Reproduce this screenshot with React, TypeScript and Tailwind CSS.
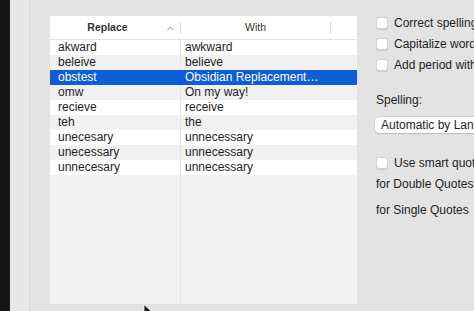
const rows = [
  ["akward", "awkward"],
  ["beleive", "believe"],
  ["obstest", "Obsidian Replacement…"],
  ["omw", "On my way!"],
  ["recieve", "receive"],
  ["teh", "the"],
  ["unecesary", "unnecessary"],
  ["unecessary", "unnecessary"],
  ["unnecesary", "unnecessary"],
];

const SELECTED = 2;

function Checkbox() {
  return (
    <span className="h-[12px] w-[12px] shrink-0 rounded-[3px] border border-[#d2d2d2] bg-white shadow-[0_0.5px_1px_rgba(0,0,0,0.12)]" />
  );
}

function CheckRow({ label }: { label: string }) {
  return (
    <div className="flex h-[21px] items-center gap-[6px]">
      <Checkbox />
      <span>{label}</span>
    </div>
  );
}

export default function App() {
  return (
    <div className="relative flex h-[311px] w-[474px] overflow-hidden whitespace-nowrap bg-[#e3e3e3] font-['Liberation_Sans',Arial,sans-serif] text-[12px] text-[#1e1e1e]">
      {/* window edge */}
      <div className="w-[10px] shrink-0 bg-[#151515]" />
      <div className="w-[20px] shrink-0 border-r border-[#d8d8d8] bg-[#e8e8e8]" />

      {/* replacements table */}
      <div className="w-[327px] shrink-0 pl-[20px] pt-[16px]">
        <div className="flex h-[288px] flex-col bg-[#f2f2f2]">
          <div className="flex h-[24px] shrink-0 items-center border-b border-[#e2e2e2] bg-white text-[10.5px] font-bold text-[#333]">
            <div className="relative flex h-full w-[130px] items-center justify-center pr-[15px]">
              Replace
              <svg
                className="absolute left-[117px] top-[10px]"
                width="7"
                height="5"
                viewBox="0 0 7 5"
              >
                <polyline
                  points="0.5,4 3.5,1 6.5,4"
                  fill="none"
                  stroke="#8a8a8a"
                  strokeWidth="1"
                />
              </svg>
            </div>
            <div className="h-[12px] w-px bg-[#dcdcdc]" />
            <div className="flex w-[149px] justify-center font-normal text-[#333]">
              With
            </div>
            <div className="h-[12px] w-px bg-[#dcdcdc]" />
          </div>

          {rows.map(([from, to], i) => {
            const sel = i === SELECTED;
            const bg = sel
              ? "bg-[#0d5dd6] text-white"
              : i % 2 === 0
                ? "bg-white"
                : "bg-[#f1f1f1]";
            return (
              <div key={i} className={`flex h-[15px] items-center leading-[15px] ${bg}`}>
                <div className="w-[130px] pl-[8px]">{from}</div>
                <div
                  className={`h-full w-px ${sel ? "bg-[#0d5dd6]" : "bg-[#e6e6e6]"}`}
                />
                <div className="flex-1 pl-[4px]">{to}</div>
              </div>
            );
          })}

          <div className="flex flex-1">
            <div className="w-[130px]" />
            <div className="w-px bg-[#e6e6e6]" />
          </div>
        </div>
      </div>

      {/* options */}
      <div className="flex-1 pl-[19px] pt-[12px]">
        <CheckRow label="Correct spelling automatically" />
        <CheckRow label="Capitalize words automatically" />
        <CheckRow label="Add period with double-space" />

        <div className="mt-[18px] h-[15px] leading-[15px]">Spelling:</div>
        <div className="-ml-px mt-[9px] flex h-[16px] w-[140px] items-center rounded-[4px] bg-white pl-[6px] shadow-[0_0_0_0.5px_rgba(0,0,0,0.15),0_1px_1px_rgba(0,0,0,0.1)]">
          Automatic by Language
        </div>

        <div className="mt-[19px]">
          <CheckRow label="Use smart quotes and dashes" />
        </div>
        <div className="flex h-[21px] items-center">for Double Quotes</div>
        <div className="mt-[5px] flex h-[21px] items-center">for Single Quotes</div>
      </div>

      {/* mouse pointer */}
      <svg
        className="absolute left-[143px] top-[304px]"
        width="10"
        height="14"
        viewBox="0 0 10 14"
      >
        <path d="M1 0.5 L1 11 L3.6 8.6 L5.4 12.6 L7 11.9 L5.3 8 L8.8 8 Z" fill="#111" stroke="#fff" strokeWidth="0.8" />
      </svg>
    </div>
  );
}
